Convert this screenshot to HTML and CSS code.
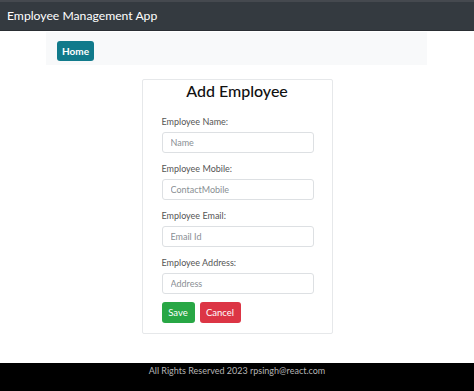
FILE: index.html
```html
<!DOCTYPE html>
<html lang="en">
<head>
    <meta charset="UTF-8">
    <meta name="viewport" content="width=device-width, initial-scale=1.0">
    <title>Employee Management App</title>
    <link rel="stylesheet" href="styles.css">
</head>
<body>
    <div class="navbar">Employee Management App</div>
    <div class="subnav">
        <button class="btn btn-home">Home</button>
    </div>
    <div class="card">
        <h2>Add Employee</h2>
        <form>
            <label for="name">Employee Name:</label>
            <input type="text" id="name" placeholder="Name">
            <label for="mobile">Employee Mobile:</label>
            <input type="text" id="mobile" placeholder="ContactMobile">
            <label for="email">Employee Email:</label>
            <input type="text" id="email" placeholder="Email Id">
            <label for="address">Employee Address:</label>
            <input type="text" id="address" placeholder="Address">
            <div class="actions">
                <button type="button" class="btn btn-save">Save</button>
                <button type="button" class="btn btn-cancel">Cancel</button>
            </div>
        </form>
    </div>
    <div class="footer">All Rights Reserved 2023 rpsingh@react.com</div>
</body>
</html>
```

FILE: styles.css
```css
body {
    font-family: Lato, 'Noto Sans', sans-serif;
    margin: 0;
    padding: 0;
    background-color: #fff;
    color: #212529;
    display: flex;
    flex-direction: column;
    min-height: 100vh;
}
.navbar {
    background-color: #343a40;
    border-top: 2px solid #45494f;
    border-bottom: 1px solid #2a2e33;
    color: #fff;
    font-size: 12.2px;
    height: 28px;
    line-height: 28px;
    padding-left: 7px;
}
.subnav {
    background-color: #f8f9fa;
    margin: 1px 47px 0 46px;
    padding: 7px 11px 6px;
    height: 20px;
}
.btn {
    border: none;
    border-radius: 3px;
    color: #fff;
    font-family: Lato, 'Noto Sans', sans-serif;
    font-size: 9.5px;
    height: 20px;
    padding: 0;
    cursor: pointer;
}
.btn-home {
    background-color: #117a8b;
    font-weight: bold;
    font-size: 10px;
    width: 37px;
}
.card {
    width: 151px;
    margin: 14px auto 0;
    padding: 0 19px 10px;
    border: 1px solid #e6e8ea;
    border-radius: 2px;
}
h2 {
    text-align: center;
    font-size: 16px;
    font-weight: 500;
    margin: 0;
    line-height: 22px;
    color: #111;
}
form {
    display: flex;
    flex-direction: column;
    margin-top: 13px;
}
label {
    font-size: 9px;
    color: #555;
    line-height: 13px;
    margin-bottom: 4px;
}
input {
    box-sizing: border-box;
    width: 152px;
    height: 21px;
    border: 1px solid #dde0e3;
    border-radius: 3px;
    padding: 0 8px;
    font-family: Lato, 'Noto Sans', sans-serif;
    font-size: 9px;
    margin-bottom: 9px;
}
input::placeholder {
    color: #8a8f94;
}
.actions {
    display: flex;
    gap: 5px;
    margin-top: -1px;
}
.btn-save {
    background-color: #28a745;
    width: 33px;
    height: 21px;
}
.btn-cancel {
    background-color: #dc3545;
    width: 41px;
    height: 21px;
}
.footer {
    margin-top: auto;
    background-color: #000;
    color: #b5b5b5;
    font-size: 9px;
    text-align: center;
    height: 28px;
    line-height: 16px;
}
```
